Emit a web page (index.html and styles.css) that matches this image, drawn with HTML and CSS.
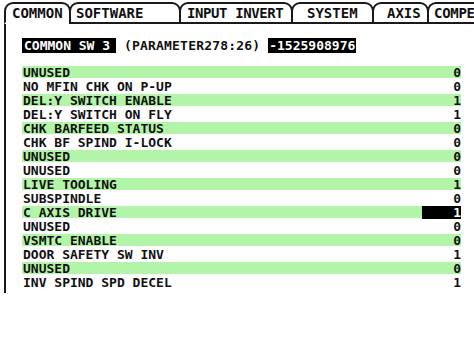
FILE: index.html
```html
<!DOCTYPE html>
<html lang="en">
<head>
  <meta charset="UTF-8" />
  <title>Common SW 3</title>
  <link rel="stylesheet" href="styles.css">
</head>
<body>
  <div class="screen">
    <div class="tabs">
      <div class="tab tab-common active">COMMON</div>
      <div class="tab tab-software">SOFTWARE</div>
      <div class="tab tab-input">INPUT INVERT</div>
      <div class="tab tab-system">SYSTEM</div>
      <div class="tab tab-axis">AXIS</div>
      <div class="tab tab-compe">COMPE</div>
    </div>

    <div class="panel">
      <div class="title">
        <span class="hl hl-name">COMMON SW 3</span> <span class="param">(PARAMETER278:26)</span> <span class="hl hl-value">-1525908976</span>
      </div>

      <div class="list">
        <div class="row"><span>UNUSED</span><span class="val">0</span></div>
        <div class="row"><span>NO MFIN CHK ON P-UP</span><span class="val">0</span></div>
        <div class="row"><span>DEL:Y SWITCH ENABLE</span><span class="val">1</span></div>
        <div class="row"><span>DEL:Y SWITCH ON FLY</span><span class="val">1</span></div>
        <div class="row"><span>CHK BARFEED STATUS</span><span class="val">0</span></div>
        <div class="row"><span>CHK BF SPIND I-LOCK</span><span class="val">0</span></div>
        <div class="row"><span>UNUSED</span><span class="val">0</span></div>
        <div class="row"><span>UNUSED</span><span class="val">0</span></div>
        <div class="row"><span>LIVE TOOLING</span><span class="val">1</span></div>
        <div class="row"><span>SUBSPINDLE</span><span class="val">0</span></div>
        <div class="row"><span>C AXIS DRIVE</span><span class="val sel">1</span></div>
        <div class="row"><span>UNUSED</span><span class="val">0</span></div>
        <div class="row"><span>VSMTC ENABLE</span><span class="val">0</span></div>
        <div class="row"><span>DOOR SAFETY SW INV</span><span class="val">1</span></div>
        <div class="row"><span>UNUSED</span><span class="val">0</span></div>
        <div class="row"><span>INV SPIND SPD DECEL</span><span class="val">1</span></div>
      </div>
    </div>
  </div>
</body>
</html>
```

FILE: styles.css
```css
body {
  margin: 0;
  background: #fff;
  font-family: "DejaVu Sans Mono", monospace;
  font-weight: bold;
  font-size: 13px;
  color: #111;
  overflow: hidden;
}
.screen {
  width: 474px;
  height: 355px;
  overflow: hidden;
}
.tabs {
  display: flex;
  padding: 2px 0 0 4px;
  height: 22px;
}
.tab {
  flex: none;
  box-sizing: border-box;
  height: 22px;
  border: 2px solid #1a1a1a;
  border-radius: 9px 9px 0 0;
  margin-right: -2px;
  font-size: 14px;
  line-height: 18px;
  white-space: nowrap;
  overflow: hidden;
  background: #fff;
}
.tab.active {
  border-bottom-color: #fff;
}
.tab-common { width: 67px; padding-left: 6px; }
.tab-software { width: 112px; padding-left: 5px; }
.tab-input { width: 114px; padding-left: 6px; letter-spacing: -0.4px; }
.tab-system { width: 83px; padding-left: 14px; }
.tab-axis { width: 57px; padding-left: 13px; }
.tab-compe { width: 47px; padding-left: 5px; letter-spacing: -0.3px; border-right: none; border-top-right-radius: 0; }

.panel {
  margin-left: 4px;
  height: 269px;
  border-left: 2px solid #1a1a1a;
  padding-left: 16px;
}
.title {
  padding-top: 15px;
  height: 13px;
  line-height: 13px;
  white-space: nowrap;
}
.param {
  letter-spacing: 0.2px;
}
.hl {
  background: #000;
  color: #fff;
}
.hl-name {
  padding: 0 6px 0 2px;
}
.hl-value {
  padding: 0 1px;
}
.list {
  margin-top: 14px;
}
.row {
  display: flex;
  justify-content: space-between;
  width: 439px;
  height: 12px;
  line-height: 13px;
  margin-bottom: 2px;
  padding-left: 1px;
  box-sizing: border-box;
}
.row:nth-child(odd) {
  background: #b3f5a8;
}
.val {
  width: 39px;
  text-align: right;
}
.val.sel {
  background: #000;
  color: #fff;
  height: 13px;
}
```
